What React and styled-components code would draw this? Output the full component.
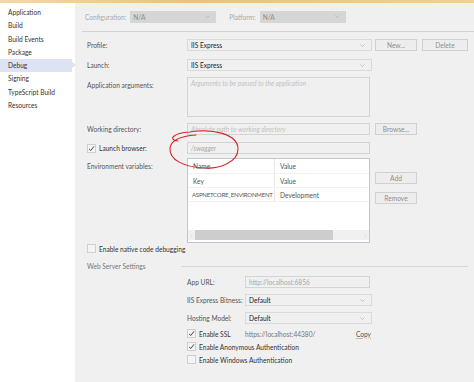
import React from 'react';
import styled, { createGlobalStyle } from 'styled-components';

const Global = createGlobalStyle`
  html, body { margin: 0; padding: 0; background: #f0f0f0; }
  body { font-family: "Lato", "Open Sans", sans-serif; }
`;

const Window = styled.div`
  position: relative;
  width: 474px;
  height: 382px;
  overflow: hidden;
  display: flex;
  flex-direction: column;
  background: #f0f0f0;
`;

const TopStrip = styled.div`
  height: 3px;
  background: linear-gradient(90deg, #f3d9a6, #eec07c 40%, #f1cf95);
`;

const Body = styled.div`
  flex: 1;
  display: flex;
`;

const Sidebar = styled.ul`
  width: 75px;
  margin: 0;
  padding: 3px 0 0;
  list-style: none;
  background: #fff;
`;

const NavItem = styled.li`
  position: relative;
  height: 13.3px;
  line-height: 13.3px;
  padding-left: 8px;
  font-size: 6.6px;
  color: #333;
  background: ${p => (p.$active ? '#dde3f3' : 'transparent')};
  margin-right: ${p => (p.$active ? '3px' : '0')};
  &::after {
    content: '';
    display: ${p => (p.$active ? 'block' : 'none')};
    position: absolute;
    right: -4px;
    top: 3px;
    border-left: 4px solid #dde3f3;
    border-top: 3.5px solid transparent;
    border-bottom: 3.5px solid transparent;
  }
`;

const Panel = styled.div`
  flex: 1;
  display: flex;
  flex-direction: column;
  font-size: 6.6px;
  color: #555;
`;

const ConfigBar = styled.div`
  display: flex;
  align-items: center;
  gap: 4px;
  padding: 8px 0 0 10px;
  height: 20px;
  box-sizing: border-box;
  color: #a8a8a8;
`;

const ConfigSelect = styled.div`
  position: relative;
  width: 86px;
  height: 12px;
  box-sizing: border-box;
  background: #d6d6d6;
  color: #8c8c8c;
  padding-left: 3px;
  line-height: 12px;
  margin-right: ${p => p.$mr || 0}px;
`;

const Separator = styled.div`
  height: 1px;
  margin: 8px 0 0 7px;
  background: #d2d2d2;
`;

const Form = styled.div`
  display: flex;
  flex-direction: column;
  padding-left: 12px;
`;

const Row = styled.div`
  display: flex;
  align-items: ${p => (p.$top ? 'flex-start' : 'center')};
  margin-top: ${p => p.$mt || 0}px;
  width: ${p => (p.$w ? `${p.$w}px` : 'auto')};
`;

const Label = styled.div`
  width: ${p => p.$w || 100}px;
  flex-shrink: 0;
  padding-top: ${p => (p.$top ? 4 : 0)}px;
  color: #555;
  white-space: nowrap;
`;

const Select = styled.div`
  position: relative;
  width: ${p => p.$w || 185}px;
  height: 12px;
  box-sizing: border-box;
  border: 1px solid #dadada;
  background: #f0f0f0;
  padding-left: 3px;
  line-height: 10px;
  color: #222;
`;

const Input = styled.div`
  width: ${p => p.$w || 183}px;
  height: ${p => p.$h || 12}px;
  box-sizing: border-box;
  border: 1px solid #d4d4d4;
  background: #f0f0f0;
  padding: 0 3px;
  line-height: 10px;
  color: #a8a8a8;
  font-style: ${p => (p.$italic ? 'italic' : 'normal')};
  white-space: nowrap;
  overflow: hidden;
`;

const Placeholder = styled.span`
  color: #c2c2c2;
  font-style: italic;
`;

const Button = styled.div`
  width: ${p => p.$w || 42}px;
  height: 12px;
  box-sizing: border-box;
  margin-left: ${p => p.$ml || 3}px;
  margin-top: ${p => p.$mt || 0}px;
  border: 1px solid #d0d0d0;
  background: #ededed;
  color: #8d8d8d;
  text-align: center;
  line-height: 10px;
`;

const ButtonColumn = styled.div`
  display: flex;
  flex-direction: column;
  padding-top: 14px;
`;

const CheckLabel = styled.div`
  display: flex;
  align-items: center;
  gap: 3px;
  width: ${p => p.$w || 'auto'};
  flex-shrink: 0;
  color: ${p => p.$color || '#333'};
  white-space: nowrap;
`;

const Box = styled.div`
  width: 9px;
  height: 9px;
  box-sizing: border-box;
  border: 1px solid #cfcfcf;
  background: #f4f4f4;
  display: flex;
  align-items: center;
  justify-content: center;
`;

const Table = styled.div`
  width: 183px;
  height: 85px;
  box-sizing: border-box;
  border: 1px solid #bfc6d4;
  background: #fff;
  display: flex;
  flex-direction: column;
`;

const TRow = styled.div`
  display: grid;
  grid-template-columns: 87px 1fr;
  height: ${p => p.$h || 13}px;
  align-items: center;
  border-bottom: 1px solid #f2f2f2;
  color: #555;
`;

const Cell = styled.div`
  padding-left: ${p => (p.$tight ? 4 : 5)}px;
  height: 100%;
  display: flex;
  align-items: center;
  border-right: ${p => (p.$div ? '1px solid #e6e6e6' : 'none')};
  font-size: ${p => (p.$tight ? '6px' : 'inherit')};
  letter-spacing: ${p => (p.$tight ? '-0.2px' : 'normal')};
  white-space: nowrap;
  overflow: hidden;
`;

const TableFill = styled.div`
  flex: 1;
`;

const ScrollBar = styled.div`
  height: 10px;
  display: flex;
  align-items: center;
  background: #f0f0f0;
  margin: 0 0 2px;
`;

const ScrollArrow = styled.div`
  width: 7px;
  color: #b8b8b8;
  font-size: 5px;
  text-align: center;
`;

const Thumb = styled.div`
  width: 138px;
  height: 10px;
  background: #cdcdcd;
`;

const Section = styled.div`
  display: flex;
  align-items: center;
  gap: 35px;
  margin-top: 9px;
  color: #777;
`;

const SectionLine = styled.div`
  flex: 1;
  height: 1px;
  margin-right: 6px;
  background: #d6d6d6;
`;

const Sub = styled.div`
  display: flex;
  flex-direction: column;
  padding-left: 100px;
`;

const Url = styled.span`
  color: #777;
`;

const Link = styled.span`
  margin-left: auto;
  margin-right: 1px;
  color: #555;
  text-decoration: underline;
  text-decoration-color: #bbb;
`;

const Annotation = styled.svg`
  position: absolute;
  left: 0;
  top: 0;
  pointer-events: none;
`;

const Chevron = () => (
  <svg width="5" height="3" viewBox="0 0 5 3" style={{ position: 'absolute', right: 6, top: 4 }}>
    <path d="M0.5 0.5 L2.5 2.5 L4.5 0.5" fill="none" stroke="#b0b0b0" strokeWidth="0.7" />
  </svg>
);

const Check = () => (
  <svg width="7" height="7" viewBox="0 0 7 7">
    <path d="M1 3.8 L2.8 5.5 L6 1.3" fill="none" stroke="#333" strokeWidth="0.9" />
  </svg>
);

const CheckBox = ({ checked }) => <Box>{checked && <Check />}</Box>;

const navItems = ['Application', 'Build', 'Build Events', 'Package', 'Debug', 'Signing', 'TypeScript Build', 'Resources'];

export default function App() {
  return (
    <Window>
      <Global />
      <TopStrip />
      <Body>
        <Sidebar>
          {navItems.map(n => (
            <NavItem key={n} $active={n === 'Debug'}>{n}</NavItem>
          ))}
        </Sidebar>
        <Panel>
          <ConfigBar>
            <span>Configuration:</span>
            <ConfigSelect $mr={9}>N/A<Chevron /></ConfigSelect>
            <span>Platform:</span>
            <ConfigSelect>N/A<Chevron /></ConfigSelect>
          </ConfigBar>
          <Separator />
          <Form>
            <Row $mt={7}>
              <Label>Profile:</Label>
              <Select>IIS Express<Chevron /></Select>
              <Button>New...</Button>
              <Button $w={46} $ml={5}>Delete</Button>
            </Row>
            <Row $mt={8}>
              <Label>Launch:</Label>
              <Select>IIS Express<Chevron /></Select>
            </Row>
            <Row $mt={6} $top>
              <Label $top>Application arguments:</Label>
              <Input $h={40}><Placeholder>Arguments to be passed to the application</Placeholder></Input>
            </Row>
            <Row $mt={6}>
              <Label>Working directory:</Label>
              <Input><Placeholder>Absolute path to working directory</Placeholder></Input>
              <Button $ml={5}>Browse...</Button>
            </Row>
            <Row $mt={7}>
              <CheckLabel $w="100px"><CheckBox checked />Launch browser:</CheckLabel>
              <Input $italic>/swagger</Input>
            </Row>
            <Row $mt={4} $top>
              <Label $top>Environment variables:</Label>
              <Table>
                <TRow $h={14}>
                  <Cell $div>Name</Cell>
                  <Cell>Value</Cell>
                </TRow>
                <TRow>
                  <Cell $div>Key</Cell>
                  <Cell>Value</Cell>
                </TRow>
                <TRow>
                  <Cell $div $tight>ASPNETCORE_ENVIRONMENT</Cell>
                  <Cell>Development</Cell>
                </TRow>
                <TableFill />
                <ScrollBar>
                  <ScrollArrow>‹</ScrollArrow>
                  <Thumb />
                  <TableFill />
                  <ScrollArrow>›</ScrollArrow>
                </ScrollBar>
              </Table>
              <ButtonColumn>
                <Button $ml={5}>Add</Button>
                <Button $ml={5} $mt={8}>Remove</Button>
              </ButtonColumn>
            </Row>
            <Row $mt={1}>
              <CheckLabel><CheckBox />Enable native code debugging</CheckLabel>
            </Row>
            <Section>
              <span>Web Server Settings</span>
              <SectionLine />
            </Section>
            <Sub>
              <Row $mt={6}>
                <Label $w={58}>App URL:</Label>
                <Input $w={125}>http://localhost:6856</Input>
              </Row>
              <Row $mt={6}>
                <Label $w={58}>IIS Express Bitness:</Label>
                <Select $w={127}>Default<Chevron /></Select>
              </Row>
              <Row $mt={6}>
                <Label $w={58}>Hosting Model:</Label>
                <Select $w={127}>Default<Chevron /></Select>
              </Row>
              <Row $mt={5} $w={185}>
                <CheckLabel $w="58px"><CheckBox checked />Enable SSL</CheckLabel>
                <Url>https://localhost:44380/</Url>
                <Link>Copy</Link>
              </Row>
              <Row $mt={4}>
                <CheckLabel><CheckBox checked />Enable Anonymous Authentication</CheckLabel>
              </Row>
              <Row $mt={4}>
                <CheckLabel><CheckBox />Enable Windows Authentication</CheckLabel>
              </Row>
            </Sub>
          </Form>
        </Panel>
      </Body>
      <Annotation width="474" height="382">
        <path
          d="M178 141 C168 140, 172 133, 190 132 C212 128, 238 134, 238 149 C238 162, 220 169, 204 168 C184 167, 169 160, 170 148 C171 140, 182 136, 196 135"
          fill="none"
          stroke="#d8262a"
          strokeWidth="1.1"
          strokeLinecap="round"
        />
      </Annotation>
    </Window>
  );
}
